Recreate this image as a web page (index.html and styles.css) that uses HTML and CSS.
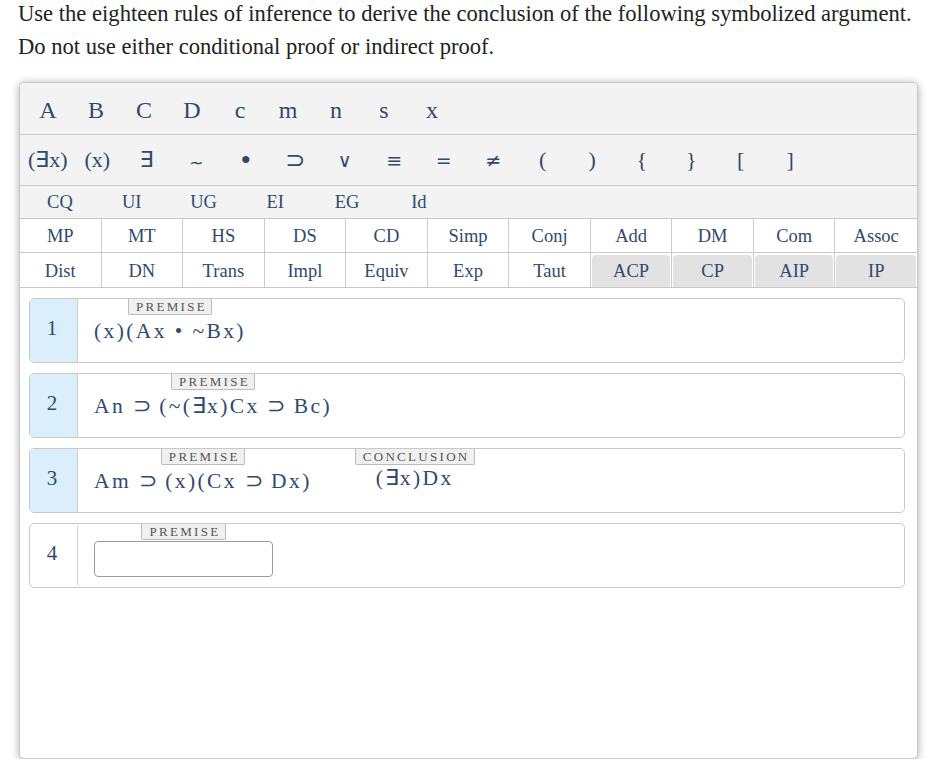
FILE: index.html
```html
<!DOCTYPE html>
<html>
<head>
<meta charset="utf-8">
<link rel="stylesheet" href="styles.css">
</head>
<body>
<div class="page">
  <p class="prompt">Use the eighteen rules of inference to derive the conclusion of the following symbolized argument.<br>Do not use either conditional proof or indirect proof.</p>
  <div class="panel">
    <div class="bar letters">
      <button class="key">A</button><button class="key">B</button><button class="key">C</button><button class="key">D</button><button class="key">c</button><button class="key">m</button><button class="key">n</button><button class="key">s</button><button class="key">x</button>
    </div>
    <div class="bar symbols">
      <button class="sym">(∃x)</button><button class="sym">(x)</button><button class="sym">∃</button><button class="sym tilde">~</button><button class="sym dot">•</button><button class="sym sup">⊃</button><button class="sym small">∨</button><button class="sym small">≡</button><button class="sym small">=</button><button class="sym small">≠</button><button class="sym">(</button><button class="sym">)</button><button class="sym">{</button><button class="sym">}</button><button class="sym">[</button><button class="sym">]</button>
    </div>
    <div class="bar quant">
      <button class="qk">CQ</button><button class="qk">UI</button><button class="qk">UG</button><button class="qk">EI</button><button class="qk">EG</button><button class="qk">Id</button>
    </div>
    <div class="rules">
      <div class="cell"><button class="rule">MP</button></div>
      <div class="cell"><button class="rule">MT</button></div>
      <div class="cell"><button class="rule">HS</button></div>
      <div class="cell"><button class="rule">DS</button></div>
      <div class="cell"><button class="rule">CD</button></div>
      <div class="cell"><button class="rule">Simp</button></div>
      <div class="cell"><button class="rule">Conj</button></div>
      <div class="cell"><button class="rule">Add</button></div>
      <div class="cell"><button class="rule">DM</button></div>
      <div class="cell"><button class="rule">Com</button></div>
      <div class="cell last"><button class="rule">Assoc</button></div>
      <div class="cell"><button class="rule">Dist</button></div>
      <div class="cell"><button class="rule">DN</button></div>
      <div class="cell"><button class="rule">Trans</button></div>
      <div class="cell"><button class="rule">Impl</button></div>
      <div class="cell"><button class="rule">Equiv</button></div>
      <div class="cell"><button class="rule">Exp</button></div>
      <div class="cell"><button class="rule">Taut</button></div>
      <div class="cell"><button class="rule off">ACP</button></div>
      <div class="cell"><button class="rule off">CP</button></div>
      <div class="cell"><button class="rule off">AIP</button></div>
      <div class="cell last"><button class="rule off">IP</button></div>
    </div>
    <div class="proof">
      <div class="line">
        <div class="num given">1</div>
        <div class="content">
          <div class="formula"><span class="tag">PREMISE</span><span class="expr">(x)(Ax • ~Bx)</span></div>
        </div>
      </div>
      <div class="line">
        <div class="num given">2</div>
        <div class="content">
          <div class="formula"><span class="tag">PREMISE</span><span class="expr">An <span class="op">⊃</span> (~(<span class="op">∃</span>x)Cx <span class="op">⊃</span> Bc)</span></div>
        </div>
      </div>
      <div class="line">
        <div class="num given">3</div>
        <div class="content">
          <div class="formula"><span class="tag">PREMISE</span><span class="expr">Am <span class="op">⊃</span> (x)(Cx <span class="op">⊃</span> Dx)</span></div>
          <div class="formula concl"><span class="tag">CONCLUSION</span><span class="expr">(<span class="op">∃</span>x)Dx</span></div>
        </div>
      </div>
      <div class="line">
        <div class="num">4</div>
        <div class="content">
          <div class="formula"><span class="tag">PREMISE</span><input class="entry" type="text"></div>
        </div>
      </div>
    </div>
  </div>
</div>
</body>
</html>
```
FILE: styles.css
```css
html, body {
  margin: 0;
  padding: 0;
  background: #ffffff;
}

.page {
  padding: 0 10px 0 18px;
  font-family: "Liberation Serif", "Times New Roman", serif;
}

.prompt {
  margin: -3px 0 0 0;
  font-size: 22.6px;
  line-height: 33px;
  color: #222;
  white-space: nowrap;
}

.panel {
  margin: 19px 0 0 1px;
  width: 899px;
  height: 677px;
  box-sizing: border-box;
  border: 1px solid #c3c9d0;
  border-radius: 5px;
  background: #ffffff;
  box-shadow: 0 1px 9px rgba(0, 0, 0, 0.32);
  overflow: hidden;
}

button {
  font-family: inherit;
  border: none;
  background: transparent;
  padding: 0;
  margin: 0;
  color: #2f4a6e;
  cursor: pointer;
}

.bar {
  display: flex;
  align-items: center;
  background: #f3f3f3;
  border-bottom: 1px solid #c8c8c8;
}

.letters {
  height: 51px;
  padding-left: 4px;
}

.key {
  width: 48px;
  font-size: 24px;
  line-height: 28px;
  padding-top: 2px;
}

.symbols {
  height: 50px;
  padding-left: 3px;
}

.sym {
  width: 49.5px;
  font-size: 22px;
  line-height: 28px;
  font-family: "Liberation Serif", "DejaVu Sans", serif;
}

.sym.small {
  font-family: "DejaVu Sans", sans-serif;
  font-size: 19px;
}

.sym.sup {
  font-family: "DejaVu Sans", sans-serif;
  font-size: 24px;
}

.sym.tilde {
  font-family: "DejaVu Sans", sans-serif;
  font-size: 17px;
  padding-top: 6px;
}

.sym.dot {
  font-size: 30px;
}

.quant {
  height: 32px;
  padding-left: 4px;
  border-bottom: 1px solid #c8c8c8;
}

.qk {
  width: 71.8px;
  font-size: 18.5px;
  line-height: 22px;
}

.rules {
  display: grid;
  grid-template-columns: repeat(11, 1fr);
  grid-auto-rows: 34px;
  border-bottom: 1px solid #c8c8c8;
}

.cell {
  border-right: 1px solid #cbcbcb;
  border-bottom: 1px solid #cbcbcb;
  display: flex;
}

.cell.last {
  border-right: none;
}

.cell:nth-last-child(-n+11) {
  border-bottom: none;
}

.rule {
  flex: 1;
  font-size: 18.5px;
  line-height: 22px;
  margin: 1px 0 0 0;
}

.rule.off {
  background: #e2e2e2;
  border-radius: 4px 4px 0 0;
  margin: 2px 1px 0 1px;
}

.proof {
  padding: 10px 12px 0 9px;
  display: flex;
  flex-direction: column;
  gap: 10px;
}

.line {
  display: flex;
  height: 65px;
  box-sizing: border-box;
  border: 1px solid #c8c8c8;
  border-radius: 5px;
  overflow: hidden;
}

.num {
  width: 48px;
  flex: none;
  border-right: 1px solid #cfcfcf;
  font-size: 21px;
  color: #2f4a6e;
  text-align: center;
  padding-top: 15px;
  padding-right: 3px;
  box-sizing: border-box;
  margin: 2px 0 2px 0;
}

.num.given {
  background: #dbeefb;
  margin: 0;
  padding-top: 17px;
}

.content {
  display: flex;
  align-items: flex-start;
  padding-left: 16px;
}

.formula {
  display: inline-flex;
  flex-direction: column;
  align-items: center;
}

.tag {
  font-size: 13px;
  line-height: 15px;
  letter-spacing: 2.3px;
  padding: 0 4px 0 7px;
  color: #555;
  background: #f0f0f0;
  border: 1px solid #bcbcbc;
  border-top: none;
  border-radius: 0 0 2px 2px;
}

.expr {
  font-size: 21.5px;
  line-height: 26px;
  letter-spacing: 2.4px;
  color: #2f4a6e;
  margin-top: 3px;
  white-space: nowrap;
}

.op {
  letter-spacing: 0.6px;
}

.concl {
  margin-left: 43px;
}

.concl .expr {
  margin-top: 0;
}

.entry {
  width: 179px;
  height: 36px;
  box-sizing: border-box;
  border: 1px solid #9a9a9a;
  border-radius: 4px;
  margin-top: 1px;
  background: #fff;
}
```
